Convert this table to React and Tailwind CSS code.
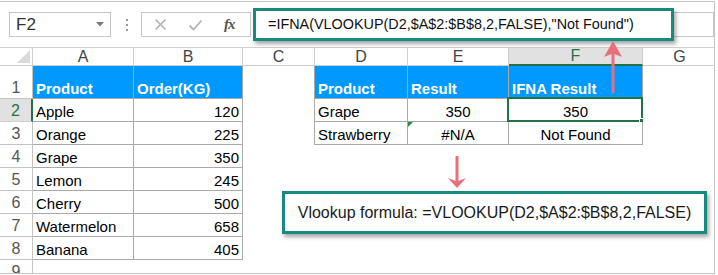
import React from "react";

const COLS = ["A", "B", "C", "D", "E", "F", "G"];

// Cell content per row: [text, align, bold-blue header?]
const rows = [
  { n: 1, h: true, cells: { A: "Product", B: "Order(KG)", D: "Product", E: "Result", F: "IFNA Result" } },
  { n: 2, cells: { A: "Apple", B: "120", D: "Grape", E: "350", F: "350" } },
  { n: 3, cells: { A: "Orange", B: "225", D: "Strawberry", E: "#N/A", F: "Not Found" } },
  { n: 4, cells: { A: "Grape", B: "350" } },
  { n: 5, cells: { A: "Lemon", B: "245" } },
  { n: 6, cells: { A: "Cherry", B: "500" } },
  { n: 7, cells: { A: "Watermelon", B: "658" } },
  { n: 8, cells: { A: "Banana", B: "405" } },
  { n: 9, cells: {} },
];

function isBordered(col, n) {
  if ((col === "A" || col === "B") && n <= 8) return true;
  if ((col === "D" || col === "E" || col === "F") && n <= 3) return true;
  return false;
}

function align(col, n) {
  if (n === 1) return "justify-start";
  if (col === "B") return "justify-end";
  if (col === "E" || col === "F") return "justify-center";
  return "justify-start";
}

function Cell({ col, n, text, header }) {
  const bordered = isBordered(col, n);
  const cEdge = col === "C" && n <= 3;
  const border = bordered
    ? "border-r border-b border-[#a9a9a9]"
    : cEdge
    ? "border-r border-[#a9a9a9]"
    : "";
  const bg = header && bordered ? "bg-[#0099ff]" : "bg-white";
  const txt = header
    ? "text-white font-bold"
    : "text-black";
  return (
    <div
      className={`relative flex items-end px-[3px] pb-px text-[15px] leading-[17px] whitespace-nowrap ${border} ${bg} ${txt} ${align(col, n)}`}
    >
      {text}
      {col === "E" && n === 3 && (
        <svg className="absolute left-0 top-0" width="6" height="6" viewBox="0 0 6 6">
          <polygon points="0,0 5,0 0,5" fill="#2a8a3a" />
        </svg>
      )}
      {col === "F" && n === 2 && (
        <div className="absolute -left-[2px] -top-[2px] -right-px -bottom-px border-2 border-[#217346]">
          <div className="absolute -right-[4px] -bottom-[4px] w-[6px] h-[6px] bg-[#217346] border border-white" />
        </div>
      )}
    </div>
  );
}

export default function App() {
  return (
    <div className="relative w-[718px] h-[275px] bg-white overflow-hidden font-['Liberation_Sans',Arial,sans-serif]">
      <div className="w-[715px] h-[273px] mt-px border-t border-r border-b border-[#c4c4c4] overflow-hidden">
        {/* formula bar */}
        <div className="flex items-center h-[45px] pl-[9px]">
          <div className="flex items-center justify-between w-[102px] h-[25px] border border-[#c6c6c6] pl-[6px] pr-[6px]">
            <span className="text-[17px] text-[#333]">F2</span>
            <svg width="8" height="5" viewBox="0 0 8 5">
              <polygon points="0,0 8,0 4,4.5" fill="#7a7a7a" />
            </svg>
          </div>
          <div className="flex flex-col gap-[3px] ml-[15px]">
            <span className="w-[2px] h-[2px] bg-[#9a9a9a]" />
            <span className="w-[2px] h-[2px] bg-[#9a9a9a]" />
            <span className="w-[2px] h-[2px] bg-[#9a9a9a]" />
          </div>
          <div className="flex items-center w-[110px] h-[25px] border border-[#c6c6c6] ml-[13px]">
            <svg className="ml-[12px]" width="13" height="13" viewBox="0 0 13 13">
              <path d="M1.5 1.5 L11.5 11.5 M11.5 1.5 L1.5 11.5" stroke="#b3b3b3" strokeWidth="1.6" fill="none" />
            </svg>
            <svg className="ml-[21px]" width="15" height="12" viewBox="0 0 15 12">
              <path d="M1.5 6.5 L5.5 10.5 L13.5 1.5" stroke="#b3b3b3" strokeWidth="1.8" fill="none" />
            </svg>
            <span className="ml-[21px] text-[15px] italic font-bold text-[#555] font-['Liberation_Serif',serif] tracking-[-1px]">
              fx
            </span>
          </div>
          <div className="relative flex-1 h-[25px] ml-[2px] border border-[#c6c6c6]">
            <div className="absolute -left-px -top-[5px] w-[421px] h-[33px] flex items-center pl-[12px] bg-white border-[3px] border-[#178a7e] shadow-[2px_3px_4px_rgba(0,0,0,0.35)] text-[14.4px] text-[#111] whitespace-nowrap">
              =IFNA(VLOOKUP(D2,$A$2:$B$8,2,FALSE),"Not Found")
            </div>
          </div>
        </div>

        {/* sheet */}
        <div className="grid grid-cols-[33px_101px_109px_72px_93px_101px_134px_74px] grid-rows-[19px_33px_23px_23px_23px_23px_23px_23px_23px_23px] w-[750px]">
          {/* corner */}
          <div className="relative border-t border-b border-r border-[#cfcfcf]">
            <svg className="absolute right-[2px] bottom-[2px]" width="13" height="13" viewBox="0 0 13 13">
              <polygon points="13,0 13,13 0,13" fill="#dadada" />
            </svg>
          </div>
          {COLS.map((c) => (
            <div
              key={c}
              className={`flex items-center justify-center border-t border-r text-[16px] leading-none ${
                c === "F"
                  ? "bg-[#e1e1e1] text-[#217346] border-b-2 border-b-[#217346] border-r-[#cfcfcf] border-t-[#cfcfcf]"
                  : "text-[#444] border-b border-[#cfcfcf]"
              }`}
            >
              {c}
            </div>
          ))}

          {rows.map((r) => (
            <React.Fragment key={r.n}>
              <div
                className={`flex items-end justify-center pb-px text-[16px] leading-[18px] border-b ${
                  r.n === 2
                    ? "bg-[#e1e1e1] text-[#217346] border-r-2 border-r-[#217346] border-b-[#cfcfcf]"
                    : "text-[#555] border-r border-[#c4c4c4]"
                }`}
              >
                {r.n}
              </div>
              {COLS.map((c) => (
                <Cell key={c} col={c} n={r.n} text={r.cells[c]} header={r.h} />
              ))}
            </React.Fragment>
          ))}
        </div>
      </div>

      {/* callout arrows */}
      <svg className="absolute left-[603px] top-[40px]" width="20" height="56" viewBox="0 0 20 56">
        <rect x="8.5" y="12" width="3" height="41" fill="#e8707b" />
        <path d="M10 1 L19 17 L10 13.5 L1 17 Z" fill="#e8707b" />
      </svg>
      <svg className="absolute left-[447px] top-[156px]" width="20" height="34" viewBox="0 0 20 34">
        <rect x="8.5" y="0" width="3" height="26" fill="#e8707b" />
        <path d="M10 32 L19 22 L10 25.5 L1 22 Z" fill="#e8707b" />
      </svg>

      {/* formula note */}
      <div className="absolute left-[282px] top-[191px] w-[425px] h-[43px] flex items-center justify-center bg-white border-[3px] border-[#178a7e] shadow-[2px_3px_4px_rgba(0,0,0,0.35)] text-[16px] text-[#1a1a1a] whitespace-nowrap">
        Vlookup formula: =VLOOKUP(D2,$A$2:$B$8,2,FALSE)
      </div>
    </div>
  );
}
